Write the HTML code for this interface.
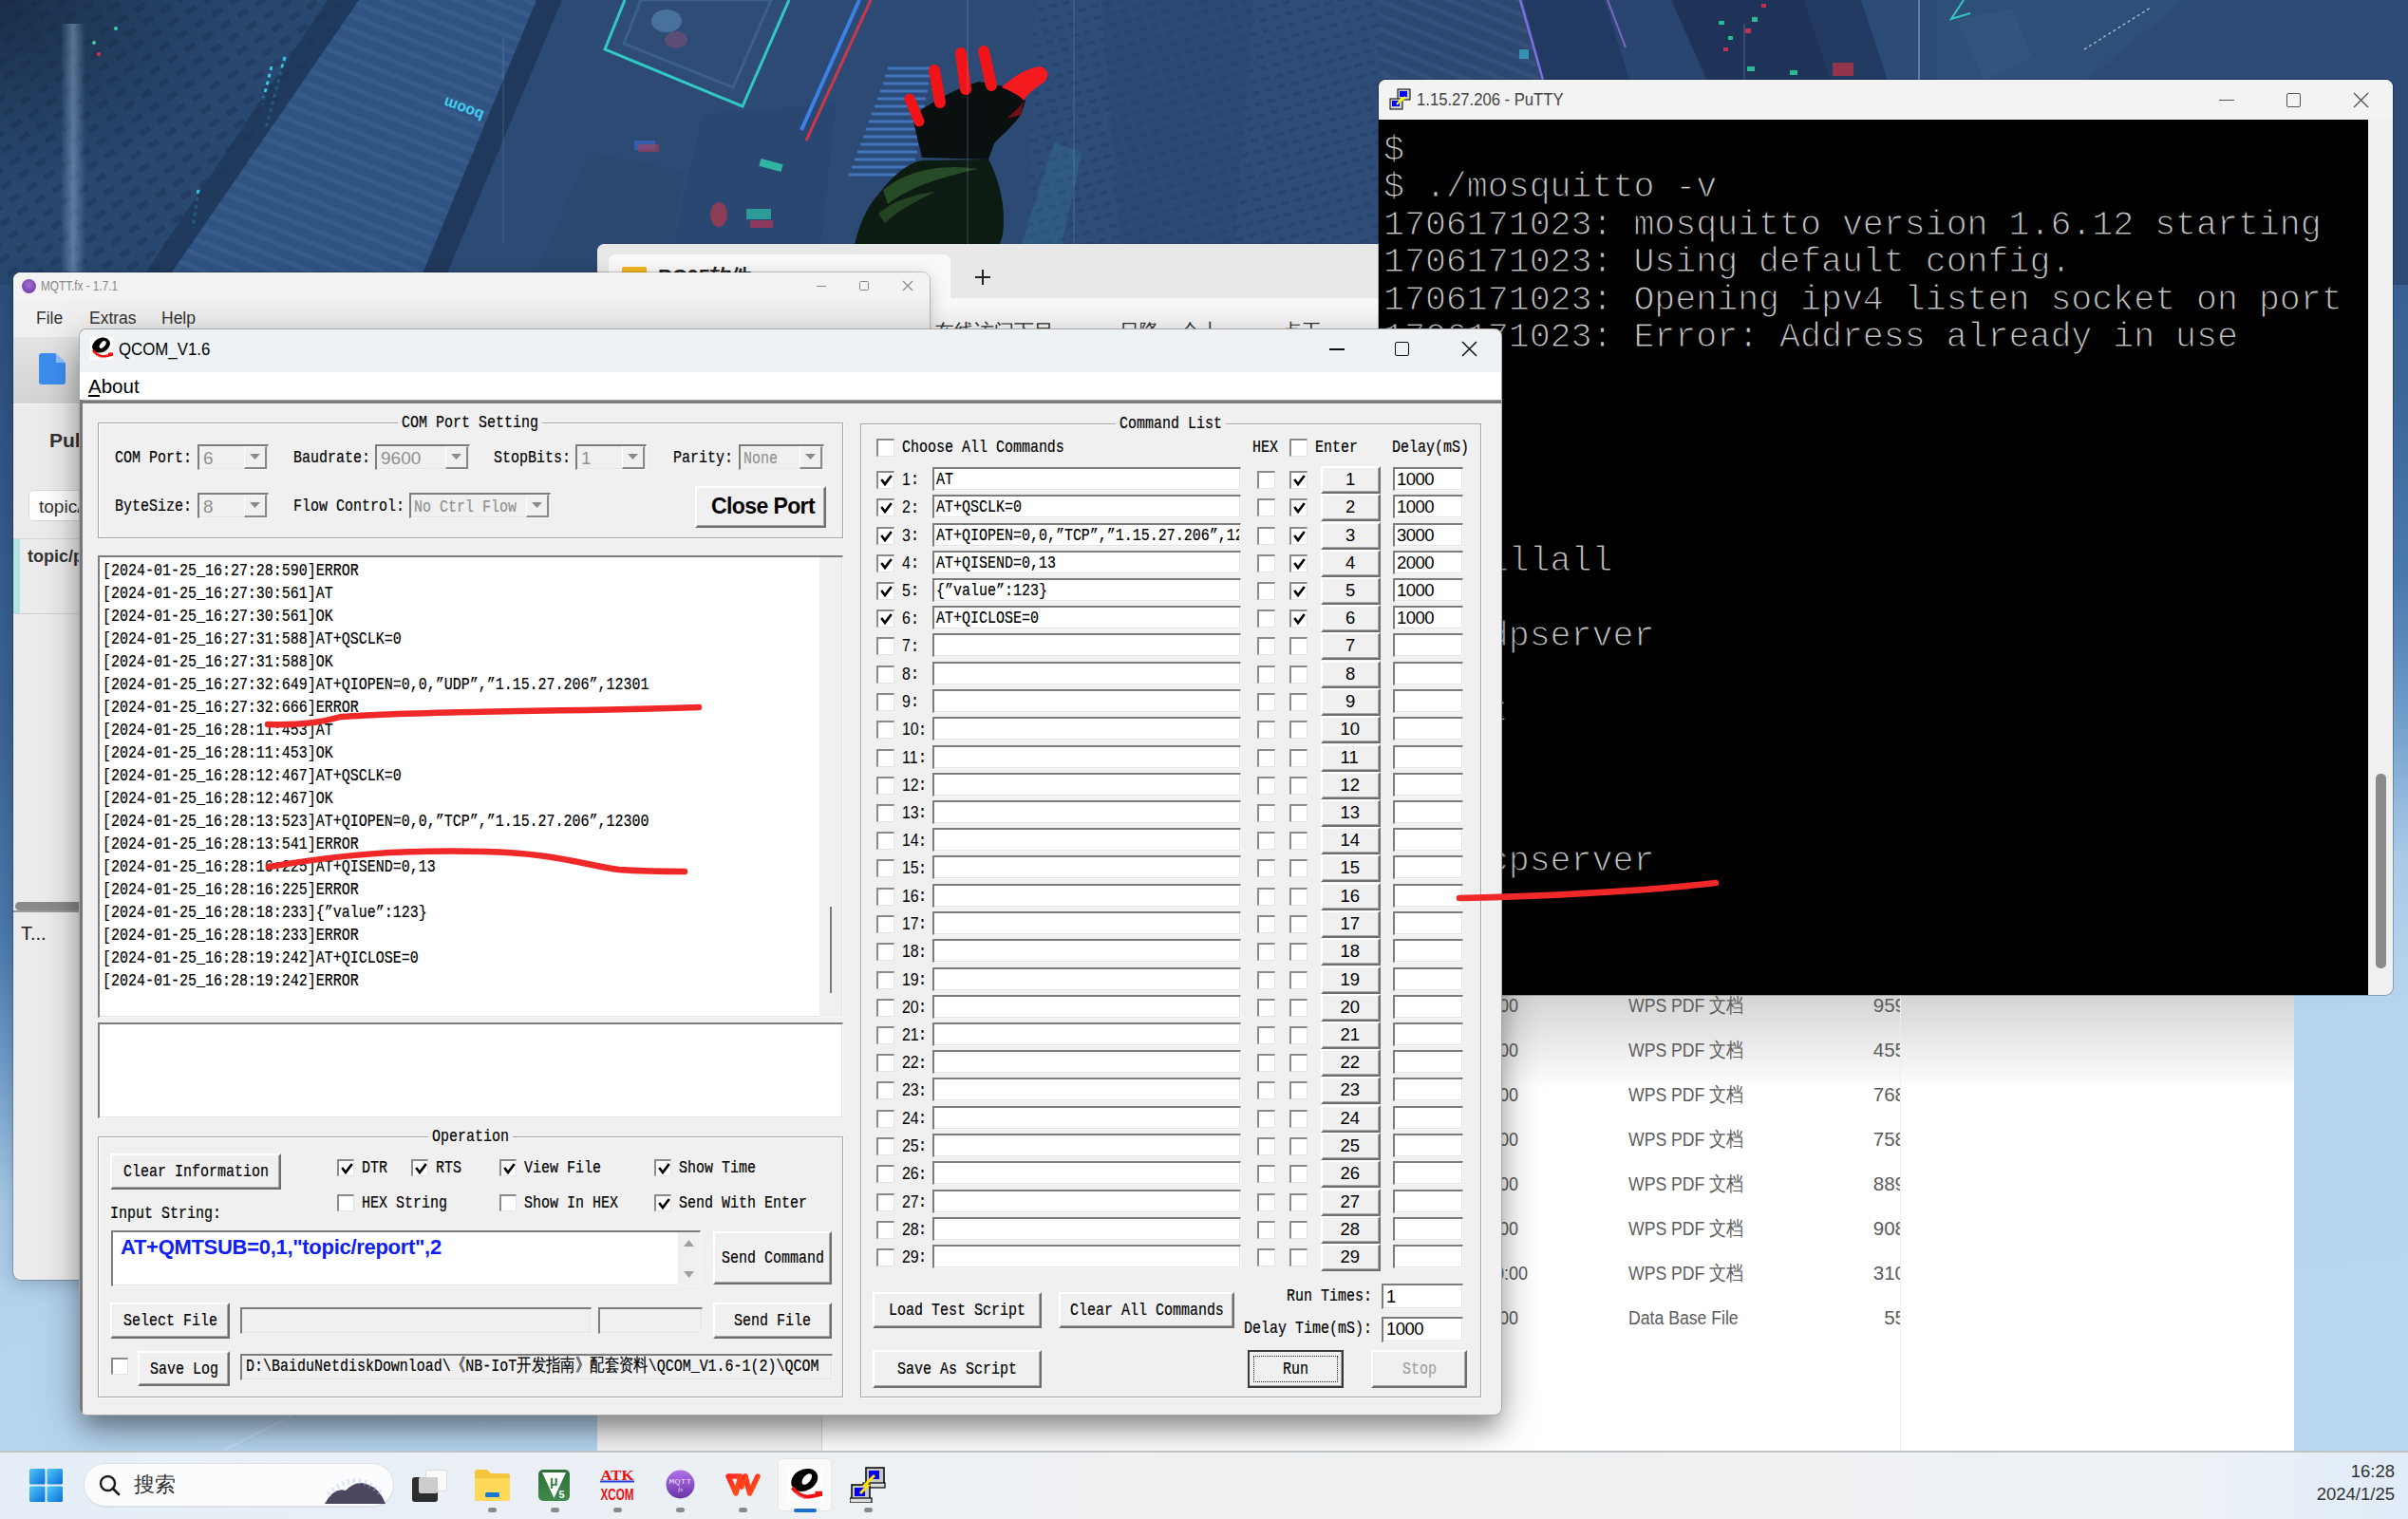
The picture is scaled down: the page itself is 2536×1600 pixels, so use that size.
<!DOCTYPE html><html><head><meta charset="utf-8"><style>
*{margin:0;padding:0;box-sizing:border-box}
html,body{width:2536px;height:1600px;overflow:hidden;background:#2a4468}
body{position:relative;font-family:"Liberation Sans",sans-serif}
.a{position:absolute}
.ss{position:absolute;font-family:"Liberation Mono",monospace;white-space:pre;color:#000;transform-origin:0 0;line-height:1;-webkit-text-stroke:0.2px currentColor}
.ui{position:absolute;font-family:"Liberation Sans",sans-serif;white-space:pre;line-height:1}
.chk{position:absolute;width:19px;height:19px;background:#fff;border-top:2px solid #8a8a8a;border-left:2px solid #8a8a8a;border-right:1px solid #e3e3e3;border-bottom:1px solid #e3e3e3}
.chk svg{position:absolute;left:1px;top:1px}
.edit{position:absolute;background:#fff;border-top:2px solid #7c7c7c;border-left:2px solid #7c7c7c;border-right:1px solid #f6f6f6;border-bottom:1px solid #f6f6f6;box-shadow:inset -1px -1px 0 #e4e4e4}
.btn{position:absolute;background:#f0f0f0;border-top:2px solid #fff;border-left:2px solid #fff;border-right:2px solid #6e6e6e;border-bottom:2px solid #6e6e6e;box-shadow:inset -1px -1px 0 #a8a8a8}
.grp{position:absolute;border:1px solid #a5a5a5;box-shadow:inset 1px 1px 0 #fff,1px 1px 0 #fff}
</style></head><body>
<svg class="a" style="left:0;top:0" width="2536" height="1528" viewBox="0 0 2536 1528">
<defs>
<linearGradient id="wg" x1="0" y1="0" x2="370" y2="2536" gradientUnits="userSpaceOnUse">
<stop offset="0" stop-color="#253c5e"/>
<stop offset="0.1" stop-color="#2d4c78"/>
<stop offset="0.2" stop-color="#33578a"/>
<stop offset="0.3" stop-color="#3c6596"/>
<stop offset="0.38" stop-color="#4a7aac"/>
<stop offset="0.43" stop-color="#6d9ac8"/>
<stop offset="0.49" stop-color="#a8cae8"/>
<stop offset="0.54" stop-color="#b4d3ee"/>
<stop offset="0.75" stop-color="#bad8f0"/>
</linearGradient>
<pattern id="win" width="22" height="16" patternUnits="userSpaceOnUse" patternTransform="rotate(-33)">
<rect width="22" height="16" fill="none"/>
<rect x="3" y="4" width="12" height="6" fill="#1a2c48" opacity="0.35"/>
</pattern>
<pattern id="str" width="20" height="14" patternUnits="userSpaceOnUse" patternTransform="rotate(22)">
<rect x="0" y="0" width="20" height="5" fill="#4a6c99" opacity="0.3"/>
</pattern>
<pattern id="grid" width="14" height="12" patternUnits="userSpaceOnUse" patternTransform="rotate(-15)">
<rect x="2" y="3" width="8" height="4" fill="#203656" opacity="0.3"/>
</pattern>
<linearGradient id="streak" x1="0" y1="0" x2="1" y2="0">
<stop offset="0" stop-color="#9fbde0" stop-opacity="0"/>
<stop offset="0.5" stop-color="#9fbde0" stop-opacity="0.45"/>
<stop offset="1" stop-color="#9fbde0" stop-opacity="0"/>
</linearGradient>
</defs>
<rect width="2536" height="1528" fill="url(#wg)"/>
<rect width="2536" height="300" fill="#2b4a75"/>
<!-- left building -->
<polygon points="0,0 372,0 153,300 0,300" fill="#284870"/>
<polygon points="0,0 372,0 153,300 0,300" fill="url(#win)"/>
<radialGradient id="tl" cx="0" cy="0" r="1" gradientUnits="userSpaceOnUse" gradientTransform="translate(0 0) scale(260 200)"><stop offset="0" stop-color="#15263f" stop-opacity="0.75"/><stop offset="1" stop-color="#15263f" stop-opacity="0"/></radialGradient>
<rect width="400" height="300" fill="url(#tl)"/>
<rect x="64" y="25" width="26" height="275" fill="url(#streak)"/>
<path d="M300 60 L280 135 M286 70 L276 110 M209 200 L203 240" stroke="#38c8e8" stroke-width="3" stroke-dasharray="4 4"/>
<circle cx="104" cy="57" r="2" fill="#e03050"/><circle cx="122" cy="30" r="2" fill="#40d0a0"/><circle cx="99" cy="45" r="2" fill="#40d0a0"/>
<!-- dark edge strip -->
<polygon points="345,0 380,0 172,300 145,300" fill="#1e3657" opacity="0.75"/>
<!-- right facade -->
<polygon points="378,0 568,0 442,300 172,300" fill="#2f5483"/>
<polygon points="378,0 568,0 442,300 172,300" fill="url(#str)"/>
<polygon points="565,0 592,0 466,300 440,300" fill="#1f3557" opacity="0.85"/>
<text x="470" y="120" font-family="Liberation Sans" font-size="16" font-weight="bold" fill="#40d0f0" transform="rotate(200 490 115)">boom</text>
<!-- middle -->
<polygon points="466,300 592,0 1090,0 1080,300" fill="#2c4a74"/>
<polygon points="560,300 620,160 720,180 700,300" fill="#2a4870"/>
<polygon points="740,120 880,110 860,300 700,300" fill="#2a4670" opacity="0.7"/>
<!-- cyan square -->
<polygon points="658,0 831,0 782,112 637,52" fill="#2e4c76"/>
<polyline points="658,0 637,52 782,112 831,0" fill="none" stroke="#32c9c4" stroke-width="3"/>
<polygon points="675,0 812,0 772,92 657,46" fill="none" stroke="#406890" stroke-width="3" opacity="0.7"/>
<ellipse cx="702" cy="22" rx="16" ry="12" fill="#5a8ab8" opacity="0.6"/>
<ellipse cx="712" cy="42" rx="12" ry="9" fill="#b05070" opacity="0.35"/>
<!-- blue/red diagonal lines -->
<line x1="905" y1="0" x2="844" y2="137" stroke="#3d80e8" stroke-width="4"/>
<line x1="917" y1="0" x2="849" y2="148" stroke="#c83848" stroke-width="3"/>
<!-- striped panel left of hand -->
<polygon points="937,68 982,66 962,205 895,187" fill="#2a4a78"/>
<g stroke="#4a80cc" stroke-width="3" opacity="0.8">
<line x1="935" y1="72" x2="980" y2="72"/><line x1="932" y1="80" x2="979" y2="80"/><line x1="930" y1="88" x2="978" y2="88"/><line x1="927" y1="96" x2="977" y2="96"/>
<line x1="924" y1="104" x2="975" y2="104"/><line x1="921" y1="112" x2="974" y2="112"/><line x1="918" y1="120" x2="973" y2="120"/><line x1="915" y1="128" x2="971" y2="128"/>
<line x1="912" y1="136" x2="970" y2="136"/><line x1="909" y1="144" x2="968" y2="144"/><line x1="906" y1="152" x2="967" y2="152"/><line x1="903" y1="160" x2="966" y2="160"/>
<line x1="900" y1="168" x2="964" y2="168"/><line x1="897" y1="176" x2="963" y2="176"/><line x1="894" y1="184" x2="962" y2="184"/>
</g>
<!-- small lights -->
<rect x="800" y="170" width="24" height="8" fill="#2fd2b0" opacity="0.8" transform="rotate(15 812 174)"/>
<rect x="786" y="220" width="26" height="11" fill="#2fd2b0" opacity="0.6"/>
<rect x="790" y="232" width="24" height="8" fill="#d03050" opacity="0.6"/>
<ellipse cx="757" cy="226" rx="9" ry="13" fill="#c03848" opacity="0.65"/>
<rect x="668" y="148" width="22" height="10" fill="#3a6ad0" opacity="0.6"/>
<rect x="672" y="152" width="22" height="8" fill="#c03848" opacity="0.5"/>
<!-- right buildings -->
<polygon points="1080,300 1090,0 1500,0 1452,300" fill="#2d4c77"/>
<polygon points="1080,300 1090,0 1500,0 1452,300" fill="url(#grid)"/>
<polygon points="1075,260 1110,150 1140,160 1115,270" fill="#40b0d0" opacity="0.15"/>
<polygon points="1160,0 1320,0 1300,260 1180,260" fill="#294570" opacity="0.5"/>
<polygon points="1452,0 2536,0 2536,90 1452,90" fill="#2b4a78"/>
<polygon points="1452,0 1600,0 1625,90 1452,90" fill="#2c4770"/>
<polygon points="1452,0 1600,0 1625,90 1452,90" fill="url(#str)" opacity="0.8"/>
<line x1="1601" y1="0" x2="1625" y2="84" stroke="#8070e0" stroke-width="2.5"/>
<rect x="1600" y="52" width="10" height="10" fill="#40c0e0" opacity="0.6"/>
<polygon points="1604,0 1690,0 1720,90 1628,90" fill="#213a62"/>
<polygon points="1690,0 1760,0 1800,90 1718,90" fill="#2a4670"/>
<line x1="1693" y1="0" x2="1712" y2="50" stroke="#9070e0" stroke-width="2" opacity="0.8"/>
<polygon points="1760,0 1900,0 1930,90 1800,90" fill="#1f3358"/>
<g opacity="0.85"><rect x="1810" y="22" width="6" height="4" fill="#30d0a0"/><rect x="1838" y="30" width="6" height="5" fill="#e03050"/><rect x="1820" y="38" width="5" height="4" fill="#30d0a0"/><rect x="1845" y="18" width="6" height="5" fill="#30d0a0"/><rect x="1815" y="50" width="5" height="4" fill="#e03050"/><rect x="1840" y="70" width="8" height="5" fill="#30d0a0"/><rect x="1855" y="4" width="5" height="4" fill="#e03050"/><rect x="1885" y="74" width="8" height="5" fill="#30d0a0"/></g>
<polygon points="1900,0 1960,0 1990,90 1930,90" fill="#223a62"/>
<polygon points="1960,0 2050,0 2080,90 1990,90" fill="#2c4a76"/>
<rect x="1930" y="66" width="22" height="14" fill="#e03040" opacity="0.6"/>
<polygon points="2040,0 2300,0 2190,90 2040,90" fill="#2e4f78"/>
<polyline points="2068,0 2055,20 2075,14" fill="none" stroke="#30c8c0" stroke-width="2"/>
<line x1="2195" y1="52" x2="2265" y2="8" stroke="#d0e0f0" stroke-width="1.5" stroke-dasharray="3 3" opacity="0.7"/>
<polygon points="2060,20 2120,10 2140,60 2090,84" fill="#3a6088" opacity="0.35"/>
<line x1="2021" y1="0" x2="2021" y2="84" stroke="#a0b8e0" stroke-width="1.5" opacity="0.6"/>
<line x1="1837" y1="25" x2="1837" y2="84" stroke="#a0b8e0" stroke-width="1" opacity="0.4"/>
<!-- hand sleeve -->
<path d="M900 258 C905 235 915 215 925 205 C940 185 955 172 971 169 L1041 168 C1048 180 1054 200 1056 215 C1058 235 1057 250 1052 258 Z" fill="#0c1c12"/>
<path d="M930 200 C955 180 990 172 1030 178 C1000 185 960 195 935 215 Z" fill="#3a6a34" opacity="0.6"/>
<path d="M925 225 C940 212 960 205 985 202 C965 212 945 222 932 235 Z" fill="#3a6a34" opacity="0.5"/>
<!-- back of hand -->
<path d="M962 128 L971 115 C990 103 1010 92 1031 86 L1057 91 C1068 95 1078 100 1080 106 L1075 121 C1065 135 1052 145 1047 151 L1041 168 L971 166 Z" fill="#0a0f10"/>
<!-- fingers -->
<g stroke="#f01418" stroke-linecap="round" fill="none">
<path d="M958 104 L968 128" stroke-width="11"/>
<path d="M984 74 L990 108" stroke-width="12"/>
<path d="M1012 56 L1017 94" stroke-width="12"/>
<path d="M1036 54 L1044 90" stroke-width="12"/>
</g>
<path d="M1055 92 C1065 82 1080 72 1095 70 C1104 72 1106 80 1100 86 C1092 92 1082 98 1078 106 C1074 100 1062 95 1055 92 Z" fill="#f51a1e"/>
<path d="M1060 125 C1068 118 1075 112 1078 106 L1075 121 Z" fill="#a01018" opacity="0.7"/>
<!-- vertical thin light lines -->
<line x1="1019" y1="0" x2="1019" y2="257" stroke="#8fb0d8" stroke-width="1" opacity="0.35"/>
<line x1="1131" y1="0" x2="1131" y2="257" stroke="#8fb0d8" stroke-width="1" opacity="0.3"/>
<line x1="530" y1="40" x2="530" y2="257" stroke="#8fb0d8" stroke-width="1" opacity="0.3"/>
<!-- light lines lower wallpaper -->
<line x1="235" y1="1528" x2="310" y2="1490" stroke="#d0e4f4" stroke-width="2" opacity="0.6"/>
</svg>
<div class="a" style="left:629px;top:257px;width:1787px;height:1271px;background:#ffffff;border-radius:8px 8px 0 0;overflow:hidden"><div class="a" style="left:0;top:0;width:1787px;height:57px;background:#e8e8e8"></div><div class="a" style="left:12px;top:11px;width:360px;height:50px;background:#f9f9f9;border-radius:8px 8px 0 0"></div><div class="a" style="left:26px;top:24px;width:26px;height:20px;background:#f2b71d;border-radius:2px"></div><div class="ui" style="left:64px;top:24px;font-size:22px;color:#222;font-weight:bold;">PC05软件</div><div class="a" style="left:390px;top:28px;width:2px;height:20px"></div><div class="a" style="left:398px;top:34px;width:16px;height:2px;background:#222"></div><div class="a" style="left:405px;top:27px;width:2px;height:16px;background:#222"></div><div class="a" style="left:0;top:57px;width:1787px;height:60px;background:#f9f9f9"></div><div class="a" style="left:0;top:1000px;width:236px;height:271px;background:#f3f3f3"></div><div class="ui" style="left:355px;top:82px;font-size:20.5px;color:#333;font-weight:normal;">在线访问下目</div><div class="ui" style="left:550px;top:82px;font-size:20.5px;color:#333;font-weight:normal;">日隆</div><div class="ui" style="left:614px;top:82px;font-size:20.5px;color:#333;font-weight:normal;">会上</div><div class="ui" style="left:721px;top:82px;font-size:20.5px;color:#333;font-weight:normal;">点工</div><div class="a" style="left:953px;top:791px;width:834px;height:100px;background:linear-gradient(rgba(0,0,0,0.17),rgba(0,0,0,0))"></div><div class="ui" style="left:925px;top:792px;font-size:20px;color:#5c5c5c;font-weight:normal;transform:scaleX(0.9);transform-origin:0 0">10:00</div><div class="ui" style="left:1086px;top:792px;font-size:20.5px;color:#5c5c5c;font-weight:normal;transform:scaleX(0.86);transform-origin:0 0">WPS PDF 文档</div><div class="a" style="left:1320px;top:792px;width:52px;height:26px;overflow:hidden"><div class="ui" style="left:0;top:0;width:91px;text-align:right;font-size:20.5px;color:#5c5c5c">959 KB</div></div><div class="ui" style="left:925px;top:839px;font-size:20px;color:#5c5c5c;font-weight:normal;transform:scaleX(0.9);transform-origin:0 0">10:00</div><div class="ui" style="left:1086px;top:839px;font-size:20.5px;color:#5c5c5c;font-weight:normal;transform:scaleX(0.86);transform-origin:0 0">WPS PDF 文档</div><div class="a" style="left:1320px;top:839px;width:52px;height:26px;overflow:hidden"><div class="ui" style="left:0;top:0;width:91px;text-align:right;font-size:20.5px;color:#5c5c5c">455 KB</div></div><div class="ui" style="left:925px;top:886px;font-size:20px;color:#5c5c5c;font-weight:normal;transform:scaleX(0.9);transform-origin:0 0">10:00</div><div class="ui" style="left:1086px;top:886px;font-size:20.5px;color:#5c5c5c;font-weight:normal;transform:scaleX(0.86);transform-origin:0 0">WPS PDF 文档</div><div class="a" style="left:1320px;top:886px;width:52px;height:26px;overflow:hidden"><div class="ui" style="left:0;top:0;width:91px;text-align:right;font-size:20.5px;color:#5c5c5c">768 KB</div></div><div class="ui" style="left:925px;top:933px;font-size:20px;color:#5c5c5c;font-weight:normal;transform:scaleX(0.9);transform-origin:0 0">10:00</div><div class="ui" style="left:1086px;top:933px;font-size:20.5px;color:#5c5c5c;font-weight:normal;transform:scaleX(0.86);transform-origin:0 0">WPS PDF 文档</div><div class="a" style="left:1320px;top:933px;width:52px;height:26px;overflow:hidden"><div class="ui" style="left:0;top:0;width:91px;text-align:right;font-size:20.5px;color:#5c5c5c">758 KB</div></div><div class="ui" style="left:925px;top:980px;font-size:20px;color:#5c5c5c;font-weight:normal;transform:scaleX(0.9);transform-origin:0 0">10:00</div><div class="ui" style="left:1086px;top:980px;font-size:20.5px;color:#5c5c5c;font-weight:normal;transform:scaleX(0.86);transform-origin:0 0">WPS PDF 文档</div><div class="a" style="left:1320px;top:980px;width:52px;height:26px;overflow:hidden"><div class="ui" style="left:0;top:0;width:91px;text-align:right;font-size:20.5px;color:#5c5c5c">889 KB</div></div><div class="ui" style="left:925px;top:1027px;font-size:20px;color:#5c5c5c;font-weight:normal;transform:scaleX(0.9);transform-origin:0 0">10:00</div><div class="ui" style="left:1086px;top:1027px;font-size:20.5px;color:#5c5c5c;font-weight:normal;transform:scaleX(0.86);transform-origin:0 0">WPS PDF 文档</div><div class="a" style="left:1320px;top:1027px;width:52px;height:26px;overflow:hidden"><div class="ui" style="left:0;top:0;width:91px;text-align:right;font-size:20.5px;color:#5c5c5c">908 KB</div></div><div class="ui" style="left:935px;top:1074px;font-size:20px;color:#5c5c5c;font-weight:normal;transform:scaleX(0.9);transform-origin:0 0">10:00</div><div class="ui" style="left:1086px;top:1074px;font-size:20.5px;color:#5c5c5c;font-weight:normal;transform:scaleX(0.86);transform-origin:0 0">WPS PDF 文档</div><div class="a" style="left:1320px;top:1074px;width:52px;height:26px;overflow:hidden"><div class="ui" style="left:0;top:0;width:91px;text-align:right;font-size:20.5px;color:#5c5c5c">310 KB</div></div><div class="ui" style="left:925px;top:1121px;font-size:20px;color:#5c5c5c;font-weight:normal;transform:scaleX(0.9);transform-origin:0 0">10:00</div><div class="ui" style="left:1086px;top:1121px;font-size:20.5px;color:#5c5c5c;font-weight:normal;transform:scaleX(0.86);transform-origin:0 0">Data Base File</div><div class="a" style="left:1320px;top:1121px;width:52px;height:26px;overflow:hidden"><div class="ui" style="left:0;top:0;width:91px;text-align:right;font-size:20.5px;color:#5c5c5c">55 KB</div></div><div class="a" style="left:1372px;top:760px;width:1px;height:511px;background:#eeeeee"></div><div class="a" style="left:236px;top:1234px;width:1px;height:37px;background:#d8d8d8"></div></div><div class="a" style="left:14px;top:287px;width:965px;height:1061px;background:#ececec;border-radius:8px;overflow:hidden;box-shadow:0 0 0 1px rgba(0,0,0,0.2),0 4px 20px rgba(0,0,0,0.2)"><div class="a" style="left:0;top:0;width:965px;height:29px;background:#f3f3f3"></div><div class="a" style="left:9px;top:7px;width:15px;height:15px;border-radius:50%;background:radial-gradient(circle at 50% 40%,#a070d0,#6a2fa0)"></div><div class="ui" style="left:29px;top:7px;font-size:14px;color:#888;font-weight:normal;transform:scaleX(0.84);transform-origin:0 0">MQTT.fx - 1.7.1</div><div class="a" style="left:846px;top:14px;width:10px;height:1.3px;background:#888"></div><div class="a" style="left:891px;top:9px;width:10px;height:10px;border:1.2px solid #888;border-radius:1.5px"></div><svg class="a" style="left:936px;top:8px" width="12" height="12"><path d="M1 1 L11 11 M11 1 L1 11" stroke="#888" stroke-width="1.2"/></svg><div class="a" style="left:0;top:29px;width:965px;height:39px;background:#f0f0f0"></div><div class="ui" style="left:24px;top:40px;font-size:17.5px;color:#333;font-weight:normal;">File</div><div class="ui" style="left:80px;top:40px;font-size:17.5px;color:#333;font-weight:normal;">Extras</div><div class="ui" style="left:156px;top:40px;font-size:17.5px;color:#333;font-weight:normal;">Help</div><div class="a" style="left:0;top:68px;width:965px;height:70px;background:linear-gradient(#e4e4e4,#d3d3d3)"></div><svg class="a" style="left:27px;top:85px" width="28" height="33"><path d="M3 0 H17 L28 11 V30 Q28 33 25 33 H3 Q0 33 0 30 V3 Q0 0 3 0 Z" fill="#3d8ef0"/><path d="M18 0 L28 10 H18 Z" fill="#8fc0fa"/></svg><div class="a" style="left:0;top:138px;width:965px;height:1px;background:#f7f7f7"></div><div class="ui" style="left:38px;top:166px;font-size:21px;color:#333;font-weight:bold;">Publish</div><div class="a" style="left:16px;top:229px;width:300px;height:33px;background:#fff;border:1px solid #d6d6d6;border-radius:5px"></div><div class="ui" style="left:27px;top:237px;font-size:19px;color:#333;font-weight:normal;">topic/report</div><div class="a" style="left:0;top:280px;width:965px;height:1px;background:#d5d5d5"></div><div class="a" style="left:0;top:281px;width:7px;height:78px;background:#b3e3e3"></div><div class="ui" style="left:15px;top:290px;font-size:18px;color:#333;font-weight:bold;">topic/publish</div><div class="a" style="left:0;top:359px;width:965px;height:1px;background:#d0d0d0"></div><div class="a" style="left:2px;top:663px;width:400px;height:9px;background:#8a8a8a;border-radius:5px"></div><div class="a" style="left:0;top:672px;width:965px;height:2px;background:#9a9a9a"></div><div class="ui" style="left:8px;top:686px;font-size:20px;color:#222;font-weight:normal;">T...</div></div><div class="a" style="left:1452px;top:84px;width:1068px;height:964px;background:#f0f0f0;border-radius:8px;overflow:hidden;box-shadow:0 0 0 1px rgba(0,0,0,0.25)"><div class="a" style="left:0;top:0;width:1068px;height:42px;background:#f3f3f3"></div><svg class="a" style="left:11px;top:9px" width="24" height="24" viewBox="0 0 24 24"><rect x="9" y="1" width="13" height="11" fill="#ccc" stroke="#000"/><rect x="11" y="3" width="8" height="6" fill="#00f"/><rect x="1" y="11" width="13" height="11" fill="#ccc" stroke="#000"/><rect x="3" y="13" width="8" height="6" fill="#00f"/><path d="M8 17 L14 10 L13 13 L17 9" stroke="#ff0" stroke-width="2" fill="none"/></svg><div class="ui" style="left:40px;top:12px;font-size:18.5px;color:#444;font-weight:normal;transform:scaleX(0.9);transform-origin:0 0">1.15.27.206 - PuTTY</div><div class="a" style="left:885px;top:21px;width:16px;height:1px;background:#555"></div><div class="a" style="left:956px;top:14px;width:15px;height:15px;border:1px solid #555;border-radius:2px"></div><svg class="a" style="left:1026px;top:13px" width="17" height="17"><path d="M1 1 L16 16 M16 1 L1 16" stroke="#555" stroke-width="1.4"/></svg><div class="a" style="left:0;top:42px;width:1042px;height:922px;background:#000"></div><div class="a" style="left:1050px;top:731px;width:11px;height:205px;background:#8a8a8a;border-radius:5px"></div><div class="a" style="left:5px;top:57px;font-family:'Liberation Mono',monospace;font-size:36.6px;line-height:1;color:#c4c4c4;-webkit-text-stroke:1.1px #000;white-space:pre">$</div><div class="a" style="left:5px;top:96px;font-family:'Liberation Mono',monospace;font-size:36.6px;line-height:1;color:#c4c4c4;-webkit-text-stroke:1.1px #000;white-space:pre">$ ./mosquitto -v</div><div class="a" style="left:5px;top:136px;font-family:'Liberation Mono',monospace;font-size:36.6px;line-height:1;color:#c4c4c4;-webkit-text-stroke:1.1px #000;white-space:pre">1706171023: mosquitto version 1.6.12 starting</div><div class="a" style="left:5px;top:175px;font-family:'Liberation Mono',monospace;font-size:36.6px;line-height:1;color:#c4c4c4;-webkit-text-stroke:1.1px #000;white-space:pre">1706171023: Using default config.</div><div class="a" style="left:5px;top:215px;font-family:'Liberation Mono',monospace;font-size:36.6px;line-height:1;color:#c4c4c4;-webkit-text-stroke:1.1px #000;white-space:pre">1706171023: Opening ipv4 listen socket on port</div><div class="a" style="left:5px;top:254px;font-family:'Liberation Mono',monospace;font-size:36.6px;line-height:1;color:#c4c4c4;-webkit-text-stroke:1.1px #000;white-space:pre">1706171023: Error: Address already in use</div><div class="a" style="left:5px;top:490px;font-family:'Liberation Mono',monospace;font-size:36.6px;line-height:1;color:#c4c4c4;-webkit-text-stroke:1.1px #000;white-space:pre">$ ./killall</div><div class="a" style="left:5px;top:569px;font-family:'Liberation Mono',monospace;font-size:36.6px;line-height:1;color:#c4c4c4;-webkit-text-stroke:1.1px #000;white-space:pre">$ ./udpserver</div><div class="a" style="left:5px;top:648px;font-family:'Liberation Mono',monospace;font-size:36.6px;line-height:1;color:#c4c4c4;-webkit-text-stroke:1.1px #000;white-space:pre">$ ls t</div><div class="a" style="left:5px;top:806px;font-family:'Liberation Mono',monospace;font-size:36.6px;line-height:1;color:#c4c4c4;-webkit-text-stroke:1.1px #000;white-space:pre">$ ./tcpserver</div></div><div class="a" style="left:83px;top:346px;width:1499px;height:1145px;background:#f0f0f0;border-radius:8px;border:1px solid rgba(110,110,110,0.55);overflow:hidden;box-shadow:0 12px 40px rgba(0,0,0,0.35),0 18px 22px -6px rgba(0,0,0,0.22)"><div class="a" style="left:0;top:0;width:1499px;height:45px;background:#eef2f4"></div><div class="a" style="left:0;top:45px;width:1499px;height:29px;background:#ffffff"></div><div class="a" style="left:0;top:74px;width:1499px;height:4px;background:linear-gradient(#a8a8a8,#6c6c6c 60%,#9a9a9a)"></div><div class="a" style="left:0;top:74px;width:3px;height:1071px;background:#777"></div></div><svg class="a" style="left:95px;top:355px" width="24" height="24" viewBox="0 0 24 24"><rect width="24" height="24" fill="#fff"/><ellipse cx="11.5" cy="8.6" rx="9.8" ry="7.4" transform="rotate(-28 11.5 8.6)" fill="#000"/><ellipse cx="13.2" cy="8" rx="4.6" ry="2.5" transform="rotate(-50 13.2 8)" fill="#fff"/><path d="M3 14 C6 18 9 20 13 20.3 C16 20.5 19 19.5 23.5 18.5" stroke="#f01010" stroke-width="2.6" fill="none"/><rect x="19" y="16.5" width="5" height="3.5" fill="#f01010"/><path d="M5 17.5 C7 19.5 9 20.5 12 21.5" stroke="#f06060" stroke-width="1" fill="none"/></svg><div class="ui" style="left:125px;top:359px;font-size:18.5px;color:#000;font-weight:normal;transform:scaleX(0.91);transform-origin:0 0">QCOM_V1.6</div><div class="a" style="left:1400px;top:367px;width:16px;height:2px;background:#111"></div><div class="a" style="left:1469px;top:360px;width:15px;height:15px;border:1.6px solid #111;border-radius:2px"></div><svg class="a" style="left:1539px;top:359px" width="17" height="17"><path d="M1 1 L16 16 M16 1 L1 16" stroke="#111" stroke-width="1.5"/></svg><div class="ui" style="left:93px;top:397px;font-size:20.5px;color:#000;font-weight:normal;">About</div><div class="a" style="left:93px;top:416px;width:12px;height:1.5px;background:#000"></div><div class="grp" style="left:103px;top:445px;width:785px;height:122px"></div><div class="a" style="left:419px;top:435px;width:152px;height:20px;background:#f0f0f0"></div><div class="ss" style="left:423.1px;top:437.2px;font-size:18.5px;transform:scaleX(0.81);color:#000;font-weight:normal;">COM Port Setting</div><div class="ss" style="left:121px;top:474.2px;font-size:18.5px;transform:scaleX(0.81);color:#000;font-weight:normal;">COM Port:</div><div class="edit" style="left:208px;top:468px;width:75px;height:27px;background:#f0f0f0"></div><div class="a" style="left:257px;top:470px;width:24px;height:24px;background:#f0f0f0;border-right:2px solid #8a8a8a;border-bottom:2px solid #8a8a8a;border-top:1px solid #fff;border-left:1px solid #fff"></div><svg class="a" style="left:263px;top:478px" width="12" height="7"><path d="M0 0 H11 L5.5 6 Z" fill="#8c8c8c"/></svg><div class="ui" style="left:214px;top:472.5px;font-size:19px;color:#909090;font-weight:normal;">6</div><div class="ss" style="left:309px;top:474.2px;font-size:18.5px;transform:scaleX(0.81);color:#000;font-weight:normal;">Baudrate:</div><div class="edit" style="left:395px;top:468px;width:100px;height:27px;background:#f0f0f0"></div><div class="a" style="left:469px;top:470px;width:24px;height:24px;background:#f0f0f0;border-right:2px solid #8a8a8a;border-bottom:2px solid #8a8a8a;border-top:1px solid #fff;border-left:1px solid #fff"></div><svg class="a" style="left:475px;top:478px" width="12" height="7"><path d="M0 0 H11 L5.5 6 Z" fill="#8c8c8c"/></svg><div class="ui" style="left:401px;top:472.5px;font-size:19px;color:#909090;font-weight:normal;">9600</div><div class="ss" style="left:520px;top:474.2px;font-size:18.5px;transform:scaleX(0.81);color:#000;font-weight:normal;">StopBits:</div><div class="edit" style="left:606px;top:468px;width:75px;height:27px;background:#f0f0f0"></div><div class="a" style="left:655px;top:470px;width:24px;height:24px;background:#f0f0f0;border-right:2px solid #8a8a8a;border-bottom:2px solid #8a8a8a;border-top:1px solid #fff;border-left:1px solid #fff"></div><svg class="a" style="left:661px;top:478px" width="12" height="7"><path d="M0 0 H11 L5.5 6 Z" fill="#8c8c8c"/></svg><div class="ui" style="left:612px;top:472.5px;font-size:19px;color:#909090;font-weight:normal;">1</div><div class="ss" style="left:709px;top:474.2px;font-size:18.5px;transform:scaleX(0.81);color:#000;font-weight:normal;">Parity:</div><div class="edit" style="left:778px;top:468px;width:90px;height:27px;background:#f0f0f0"></div><div class="a" style="left:842px;top:470px;width:24px;height:24px;background:#f0f0f0;border-right:2px solid #8a8a8a;border-bottom:2px solid #8a8a8a;border-top:1px solid #fff;border-left:1px solid #fff"></div><svg class="a" style="left:848px;top:478px" width="12" height="7"><path d="M0 0 H11 L5.5 6 Z" fill="#8c8c8c"/></svg><div class="ss" style="left:783px;top:474.7px;font-size:18.5px;transform:scaleX(0.81);color:#909090;font-weight:normal;">None</div><div class="ss" style="left:121px;top:525.2px;font-size:18.5px;transform:scaleX(0.81);color:#000;font-weight:normal;">ByteSize:</div><div class="edit" style="left:208px;top:519px;width:75px;height:27px;background:#f0f0f0"></div><div class="a" style="left:257px;top:521px;width:24px;height:24px;background:#f0f0f0;border-right:2px solid #8a8a8a;border-bottom:2px solid #8a8a8a;border-top:1px solid #fff;border-left:1px solid #fff"></div><svg class="a" style="left:263px;top:529px" width="12" height="7"><path d="M0 0 H11 L5.5 6 Z" fill="#8c8c8c"/></svg><div class="ui" style="left:214px;top:523.5px;font-size:19px;color:#909090;font-weight:normal;">8</div><div class="ss" style="left:309px;top:525.2px;font-size:18.5px;transform:scaleX(0.81);color:#000;font-weight:normal;">Flow Control:</div><div class="edit" style="left:431px;top:519px;width:149px;height:27px;background:#f0f0f0"></div><div class="a" style="left:554px;top:521px;width:24px;height:24px;background:#f0f0f0;border-right:2px solid #8a8a8a;border-bottom:2px solid #8a8a8a;border-top:1px solid #fff;border-left:1px solid #fff"></div><svg class="a" style="left:560px;top:529px" width="12" height="7"><path d="M0 0 H11 L5.5 6 Z" fill="#8c8c8c"/></svg><div class="ss" style="left:436px;top:525.7px;font-size:18.5px;transform:scaleX(0.81);color:#909090;font-weight:normal;">No Ctrl Flow</div><div class="btn" style="left:732px;top:512px;width:138px;height:44px"></div><div class="ui" style="left:749px;top:522px;font-size:23px;color:#000;font-weight:bold;letter-spacing:-0.6px">Close Port</div><div class="edit" style="left:103px;top:585px;width:785px;height:487px;background:#fff"></div><div class="a" style="left:863px;top:587px;width:23px;height:484px;background:#f0f0f0"></div><div class="a" style="left:874px;top:955px;width:2px;height:91px;background:#7a7a7a"></div><div class="ss" style="left:108px;top:593.2px;font-size:18.5px;transform:scaleX(0.81);color:#000;font-weight:normal;">[2024-01-25_16:27:28:590]ERROR</div><div class="ss" style="left:108px;top:617.2px;font-size:18.5px;transform:scaleX(0.81);color:#000;font-weight:normal;">[2024-01-25_16:27:30:561]AT</div><div class="ss" style="left:108px;top:641.2px;font-size:18.5px;transform:scaleX(0.81);color:#000;font-weight:normal;">[2024-01-25_16:27:30:561]OK</div><div class="ss" style="left:108px;top:665.2px;font-size:18.5px;transform:scaleX(0.81);color:#000;font-weight:normal;">[2024-01-25_16:27:31:588]AT+QSCLK=0</div><div class="ss" style="left:108px;top:689.2px;font-size:18.5px;transform:scaleX(0.81);color:#000;font-weight:normal;">[2024-01-25_16:27:31:588]OK</div><div class="ss" style="left:108px;top:713.2px;font-size:18.5px;transform:scaleX(0.81);color:#000;font-weight:normal;">[2024-01-25_16:27:32:649]AT+QIOPEN=0,0,”UDP”,”1.15.27.206”,12301</div><div class="ss" style="left:108px;top:737.2px;font-size:18.5px;transform:scaleX(0.81);color:#000;font-weight:normal;">[2024-01-25_16:27:32:666]ERROR</div><div class="ss" style="left:108px;top:761.2px;font-size:18.5px;transform:scaleX(0.81);color:#000;font-weight:normal;">[2024-01-25_16:28:11:453]AT</div><div class="ss" style="left:108px;top:785.2px;font-size:18.5px;transform:scaleX(0.81);color:#000;font-weight:normal;">[2024-01-25_16:28:11:453]OK</div><div class="ss" style="left:108px;top:809.2px;font-size:18.5px;transform:scaleX(0.81);color:#000;font-weight:normal;">[2024-01-25_16:28:12:467]AT+QSCLK=0</div><div class="ss" style="left:108px;top:833.2px;font-size:18.5px;transform:scaleX(0.81);color:#000;font-weight:normal;">[2024-01-25_16:28:12:467]OK</div><div class="ss" style="left:108px;top:857.2px;font-size:18.5px;transform:scaleX(0.81);color:#000;font-weight:normal;">[2024-01-25_16:28:13:523]AT+QIOPEN=0,0,”TCP”,”1.15.27.206”,12300</div><div class="ss" style="left:108px;top:881.2px;font-size:18.5px;transform:scaleX(0.81);color:#000;font-weight:normal;">[2024-01-25_16:28:13:541]ERROR</div><div class="ss" style="left:108px;top:905.2px;font-size:18.5px;transform:scaleX(0.81);color:#000;font-weight:normal;">[2024-01-25_16:28:16:225]AT+QISEND=0,13</div><div class="ss" style="left:108px;top:929.2px;font-size:18.5px;transform:scaleX(0.81);color:#000;font-weight:normal;">[2024-01-25_16:28:16:225]ERROR</div><div class="ss" style="left:108px;top:953.2px;font-size:18.5px;transform:scaleX(0.81);color:#000;font-weight:normal;">[2024-01-25_16:28:18:233]{”value”:123}</div><div class="ss" style="left:108px;top:977.2px;font-size:18.5px;transform:scaleX(0.81);color:#000;font-weight:normal;">[2024-01-25_16:28:18:233]ERROR</div><div class="ss" style="left:108px;top:1001.2px;font-size:18.5px;transform:scaleX(0.81);color:#000;font-weight:normal;">[2024-01-25_16:28:19:242]AT+QICLOSE=0</div><div class="ss" style="left:108px;top:1025.2px;font-size:18.5px;transform:scaleX(0.81);color:#000;font-weight:normal;">[2024-01-25_16:28:19:242]ERROR</div><div class="edit" style="left:103px;top:1077px;width:785px;height:101px;background:#fff"></div><div class="grp" style="left:103px;top:1197px;width:785px;height:275px"></div><div class="a" style="left:451px;top:1187px;width:89px;height:20px;background:#f0f0f0"></div><div class="ss" style="left:454.5px;top:1189.2px;font-size:18.5px;transform:scaleX(0.81);color:#000;font-weight:normal;">Operation</div><div class="btn" style="left:116px;top:1215px;width:180px;height:38px;"></div><div class="ss" style="left:129.6px;top:1226.2px;font-size:18.5px;transform:scaleX(0.81);color:#000;font-weight:normal;">Clear Information</div><div class="chk" style="left:355px;top:1221px;width:18px;height:18px"><svg width="15" height="15" viewBox="0 0 15 15"><path d="M3 7 L6 11 L12 3" stroke="#000" stroke-width="2.6" fill="none" stroke-linecap="square"/></svg></div><div class="ss" style="left:381px;top:1222.2px;font-size:18.5px;transform:scaleX(0.81);color:#000;font-weight:normal;">DTR</div><div class="chk" style="left:433px;top:1221px;width:18px;height:18px"><svg width="15" height="15" viewBox="0 0 15 15"><path d="M3 7 L6 11 L12 3" stroke="#000" stroke-width="2.6" fill="none" stroke-linecap="square"/></svg></div><div class="ss" style="left:459px;top:1222.2px;font-size:18.5px;transform:scaleX(0.81);color:#000;font-weight:normal;">RTS</div><div class="chk" style="left:526px;top:1221px;width:18px;height:18px"><svg width="15" height="15" viewBox="0 0 15 15"><path d="M3 7 L6 11 L12 3" stroke="#000" stroke-width="2.6" fill="none" stroke-linecap="square"/></svg></div><div class="ss" style="left:552px;top:1222.2px;font-size:18.5px;transform:scaleX(0.81);color:#000;font-weight:normal;">View File</div><div class="chk" style="left:689px;top:1221px;width:18px;height:18px"><svg width="15" height="15" viewBox="0 0 15 15"><path d="M3 7 L6 11 L12 3" stroke="#000" stroke-width="2.6" fill="none" stroke-linecap="square"/></svg></div><div class="ss" style="left:715px;top:1222.2px;font-size:18.5px;transform:scaleX(0.81);color:#000;font-weight:normal;">Show Time</div><div class="chk" style="left:355px;top:1258px;width:18px;height:18px"></div><div class="ss" style="left:381px;top:1259.2px;font-size:18.5px;transform:scaleX(0.81);color:#000;font-weight:normal;">HEX String</div><div class="chk" style="left:526px;top:1258px;width:18px;height:18px"></div><div class="ss" style="left:552px;top:1259.2px;font-size:18.5px;transform:scaleX(0.81);color:#000;font-weight:normal;">Show In HEX</div><div class="chk" style="left:689px;top:1258px;width:18px;height:18px"><svg width="15" height="15" viewBox="0 0 15 15"><path d="M3 7 L6 11 L12 3" stroke="#000" stroke-width="2.6" fill="none" stroke-linecap="square"/></svg></div><div class="ss" style="left:715px;top:1259.2px;font-size:18.5px;transform:scaleX(0.81);color:#000;font-weight:normal;">Send With Enter</div><div class="ss" style="left:116px;top:1270.2px;font-size:18.5px;transform:scaleX(0.81);color:#000;font-weight:normal;">Input String:</div><div class="edit" style="left:117px;top:1296px;width:621px;height:59px;background:#fff"></div><div class="a" style="left:714px;top:1298px;width:23px;height:56px;background:#f0f0f0"></div><svg class="a" style="left:719px;top:1306px" width="13" height="40"><path d="M6.5 0 L12 7 H1 Z M6.5 40 L12 33 H1 Z" fill="#a0a0a0"/></svg><div class="ui" style="left:127px;top:1303px;font-size:22px;color:#1020f0;font-weight:bold;letter-spacing:-0.3px">AT+QMTSUB=0,1,"topic/report",2</div><div class="btn" style="left:751px;top:1297px;width:125px;height:56px;"></div><div class="ss" style="left:759.6px;top:1317.2px;font-size:18.5px;transform:scaleX(0.81);color:#000;font-weight:normal;">Send Command</div><div class="btn" style="left:116px;top:1372px;width:126px;height:38px;"></div><div class="ss" style="left:129.5px;top:1383.2px;font-size:18.5px;transform:scaleX(0.81);color:#000;font-weight:normal;">Select File</div><div class="edit" style="left:253px;top:1377px;width:370px;height:28px;background:#f0f0f0"></div><div class="edit" style="left:630px;top:1377px;width:110px;height:28px;background:#f0f0f0"></div><div class="btn" style="left:751px;top:1372px;width:125px;height:38px;"></div><div class="ss" style="left:773.0px;top:1383.2px;font-size:18.5px;transform:scaleX(0.81);color:#000;font-weight:normal;">Send File</div><div class="chk" style="left:117px;top:1430px;width:18px;height:18px"></div><div class="btn" style="left:145px;top:1423px;width:97px;height:37px;"></div><div class="ss" style="left:157.5px;top:1433.7px;font-size:18.5px;transform:scaleX(0.81);color:#000;font-weight:normal;">Save Log</div><div class="edit" style="left:253px;top:1426px;width:624px;height:28px;background:#f0f0f0"></div><div class="a" style="left:256px;top:1428px;width:619px;height:24px;overflow:hidden"><div class="ss" style="left:3px;top:3px;font-size:18.5px;transform:scaleX(0.81);color:#000;font-weight:normal;">D:\BaiduNetdiskDownload\《NB-IoT开发指南》配套资料\QCOM_V1.6-1(2)\QCOM</div></div><div class="grp" style="left:906px;top:446px;width:654px;height:1026px"></div><div class="a" style="left:1175px;top:436px;width:116px;height:20px;background:#f0f0f0"></div><div class="ss" style="left:1179.1px;top:438.2px;font-size:18.5px;transform:scaleX(0.81);color:#000;font-weight:normal;">Command List</div><div class="chk" style="left:923px;top:462px;width:19px;height:19px"></div><div class="ss" style="left:950px;top:463.2px;font-size:18.5px;transform:scaleX(0.81);color:#000;font-weight:normal;">Choose All Commands</div><div class="ss" style="left:1319px;top:463.2px;font-size:18.5px;transform:scaleX(0.81);color:#000;font-weight:normal;">HEX</div><div class="chk" style="left:1358px;top:462px;width:19px;height:19px"></div><div class="ss" style="left:1385px;top:463.2px;font-size:18.5px;transform:scaleX(0.81);color:#000;font-weight:normal;">Enter</div><div class="ss" style="left:1466px;top:463.2px;font-size:18.5px;transform:scaleX(0.81);color:#000;font-weight:normal;">Delay(mS)</div><div class="chk" style="left:923px;top:496px;width:19px;height:19px"><svg width="15" height="15" viewBox="0 0 15 15"><path d="M3 7 L6 11 L12 3" stroke="#000" stroke-width="2.6" fill="none" stroke-linecap="square"/></svg></div><div class="ui" style="left:950px;top:496px;font-size:18.5px;color:#000;font-weight:normal;transform:scaleX(0.86);transform-origin:0 0">1</div><div class="ss" style="left:959px;top:497.2px;font-size:18.5px;transform:scaleX(0.81);color:#000;font-weight:normal;">:</div><div class="edit" style="left:982px;top:492px;width:325px;height:25px;background:#fff"></div><div class="a" style="left:984px;top:494px;width:321px;height:22px;overflow:hidden"><div class="ss" style="left:2px;top:3.2px;font-size:18.5px;transform:scaleX(0.81);color:#000;font-weight:normal;">AT</div></div><div class="chk" style="left:1324px;top:496px;width:19px;height:19px"></div><div class="chk" style="left:1358px;top:496px;width:19px;height:19px"><svg width="15" height="15" viewBox="0 0 15 15"><path d="M3 7 L6 11 L12 3" stroke="#000" stroke-width="2.6" fill="none" stroke-linecap="square"/></svg></div><div class="btn" style="left:1391px;top:491px;width:63px;height:29px"></div><div class="ui" style="left:1417.0px;top:496px;font-size:18.5px;color:#000;font-weight:normal;">1</div><div class="edit" style="left:1467px;top:492px;width:74px;height:25px;background:#fff"></div><div class="ui" style="left:1471px;top:496px;font-size:18.5px;color:#000;font-weight:normal;letter-spacing:-0.5px">1000</div><div class="chk" style="left:923px;top:525px;width:19px;height:19px"><svg width="15" height="15" viewBox="0 0 15 15"><path d="M3 7 L6 11 L12 3" stroke="#000" stroke-width="2.6" fill="none" stroke-linecap="square"/></svg></div><div class="ui" style="left:950px;top:525px;font-size:18.5px;color:#000;font-weight:normal;transform:scaleX(0.86);transform-origin:0 0">2</div><div class="ss" style="left:959px;top:526.5px;font-size:18.5px;transform:scaleX(0.81);color:#000;font-weight:normal;">:</div><div class="edit" style="left:982px;top:521px;width:325px;height:25px;background:#fff"></div><div class="a" style="left:984px;top:523px;width:321px;height:22px;overflow:hidden"><div class="ss" style="left:2px;top:3.2px;font-size:18.5px;transform:scaleX(0.81);color:#000;font-weight:normal;">AT+QSCLK=0</div></div><div class="chk" style="left:1324px;top:525px;width:19px;height:19px"></div><div class="chk" style="left:1358px;top:525px;width:19px;height:19px"><svg width="15" height="15" viewBox="0 0 15 15"><path d="M3 7 L6 11 L12 3" stroke="#000" stroke-width="2.6" fill="none" stroke-linecap="square"/></svg></div><div class="btn" style="left:1391px;top:520px;width:63px;height:29px"></div><div class="ui" style="left:1417.0px;top:525px;font-size:18.5px;color:#000;font-weight:normal;">2</div><div class="edit" style="left:1467px;top:521px;width:74px;height:25px;background:#fff"></div><div class="ui" style="left:1471px;top:525px;font-size:18.5px;color:#000;font-weight:normal;letter-spacing:-0.5px">1000</div><div class="chk" style="left:923px;top:555px;width:19px;height:19px"><svg width="15" height="15" viewBox="0 0 15 15"><path d="M3 7 L6 11 L12 3" stroke="#000" stroke-width="2.6" fill="none" stroke-linecap="square"/></svg></div><div class="ui" style="left:950px;top:555px;font-size:18.5px;color:#000;font-weight:normal;transform:scaleX(0.86);transform-origin:0 0">3</div><div class="ss" style="left:959px;top:555.7px;font-size:18.5px;transform:scaleX(0.81);color:#000;font-weight:normal;">:</div><div class="edit" style="left:982px;top:551px;width:325px;height:25px;background:#fff"></div><div class="a" style="left:984px;top:553px;width:321px;height:22px;overflow:hidden"><div class="ss" style="left:2px;top:3.2px;font-size:18.5px;transform:scaleX(0.81);color:#000;font-weight:normal;">AT+QIOPEN=0,0,”TCP”,”1.15.27.206”,12300</div></div><div class="chk" style="left:1324px;top:555px;width:19px;height:19px"></div><div class="chk" style="left:1358px;top:555px;width:19px;height:19px"><svg width="15" height="15" viewBox="0 0 15 15"><path d="M3 7 L6 11 L12 3" stroke="#000" stroke-width="2.6" fill="none" stroke-linecap="square"/></svg></div><div class="btn" style="left:1391px;top:550px;width:63px;height:29px"></div><div class="ui" style="left:1417.0px;top:555px;font-size:18.5px;color:#000;font-weight:normal;">3</div><div class="edit" style="left:1467px;top:551px;width:74px;height:25px;background:#fff"></div><div class="ui" style="left:1471px;top:555px;font-size:18.5px;color:#000;font-weight:normal;letter-spacing:-0.5px">3000</div><div class="chk" style="left:923px;top:584px;width:19px;height:19px"><svg width="15" height="15" viewBox="0 0 15 15"><path d="M3 7 L6 11 L12 3" stroke="#000" stroke-width="2.6" fill="none" stroke-linecap="square"/></svg></div><div class="ui" style="left:950px;top:584px;font-size:18.5px;color:#000;font-weight:normal;transform:scaleX(0.86);transform-origin:0 0">4</div><div class="ss" style="left:959px;top:585.0px;font-size:18.5px;transform:scaleX(0.81);color:#000;font-weight:normal;">:</div><div class="edit" style="left:982px;top:580px;width:325px;height:25px;background:#fff"></div><div class="a" style="left:984px;top:582px;width:321px;height:22px;overflow:hidden"><div class="ss" style="left:2px;top:3.2px;font-size:18.5px;transform:scaleX(0.81);color:#000;font-weight:normal;">AT+QISEND=0,13</div></div><div class="chk" style="left:1324px;top:584px;width:19px;height:19px"></div><div class="chk" style="left:1358px;top:584px;width:19px;height:19px"><svg width="15" height="15" viewBox="0 0 15 15"><path d="M3 7 L6 11 L12 3" stroke="#000" stroke-width="2.6" fill="none" stroke-linecap="square"/></svg></div><div class="btn" style="left:1391px;top:579px;width:63px;height:29px"></div><div class="ui" style="left:1417.0px;top:584px;font-size:18.5px;color:#000;font-weight:normal;">4</div><div class="edit" style="left:1467px;top:580px;width:74px;height:25px;background:#fff"></div><div class="ui" style="left:1471px;top:584px;font-size:18.5px;color:#000;font-weight:normal;letter-spacing:-0.5px">2000</div><div class="chk" style="left:923px;top:613px;width:19px;height:19px"><svg width="15" height="15" viewBox="0 0 15 15"><path d="M3 7 L6 11 L12 3" stroke="#000" stroke-width="2.6" fill="none" stroke-linecap="square"/></svg></div><div class="ui" style="left:950px;top:613px;font-size:18.5px;color:#000;font-weight:normal;transform:scaleX(0.86);transform-origin:0 0">5</div><div class="ss" style="left:959px;top:614.2px;font-size:18.5px;transform:scaleX(0.81);color:#000;font-weight:normal;">:</div><div class="edit" style="left:982px;top:609px;width:325px;height:25px;background:#fff"></div><div class="a" style="left:984px;top:611px;width:321px;height:22px;overflow:hidden"><div class="ss" style="left:2px;top:3.2px;font-size:18.5px;transform:scaleX(0.81);color:#000;font-weight:normal;">{”value”:123}</div></div><div class="chk" style="left:1324px;top:613px;width:19px;height:19px"></div><div class="chk" style="left:1358px;top:613px;width:19px;height:19px"><svg width="15" height="15" viewBox="0 0 15 15"><path d="M3 7 L6 11 L12 3" stroke="#000" stroke-width="2.6" fill="none" stroke-linecap="square"/></svg></div><div class="btn" style="left:1391px;top:608px;width:63px;height:29px"></div><div class="ui" style="left:1417.0px;top:613px;font-size:18.5px;color:#000;font-weight:normal;">5</div><div class="edit" style="left:1467px;top:609px;width:74px;height:25px;background:#fff"></div><div class="ui" style="left:1471px;top:613px;font-size:18.5px;color:#000;font-weight:normal;letter-spacing:-0.5px">1000</div><div class="chk" style="left:923px;top:642px;width:19px;height:19px"><svg width="15" height="15" viewBox="0 0 15 15"><path d="M3 7 L6 11 L12 3" stroke="#000" stroke-width="2.6" fill="none" stroke-linecap="square"/></svg></div><div class="ui" style="left:950px;top:642px;font-size:18.5px;color:#000;font-weight:normal;transform:scaleX(0.86);transform-origin:0 0">6</div><div class="ss" style="left:959px;top:643.5px;font-size:18.5px;transform:scaleX(0.81);color:#000;font-weight:normal;">:</div><div class="edit" style="left:982px;top:638px;width:325px;height:25px;background:#fff"></div><div class="a" style="left:984px;top:640px;width:321px;height:22px;overflow:hidden"><div class="ss" style="left:2px;top:3.2px;font-size:18.5px;transform:scaleX(0.81);color:#000;font-weight:normal;">AT+QICLOSE=0</div></div><div class="chk" style="left:1324px;top:642px;width:19px;height:19px"></div><div class="chk" style="left:1358px;top:642px;width:19px;height:19px"><svg width="15" height="15" viewBox="0 0 15 15"><path d="M3 7 L6 11 L12 3" stroke="#000" stroke-width="2.6" fill="none" stroke-linecap="square"/></svg></div><div class="btn" style="left:1391px;top:637px;width:63px;height:29px"></div><div class="ui" style="left:1417.0px;top:642px;font-size:18.5px;color:#000;font-weight:normal;">6</div><div class="edit" style="left:1467px;top:638px;width:74px;height:25px;background:#fff"></div><div class="ui" style="left:1471px;top:642px;font-size:18.5px;color:#000;font-weight:normal;letter-spacing:-0.5px">1000</div><div class="chk" style="left:923px;top:671px;width:19px;height:19px"></div><div class="ui" style="left:950px;top:671px;font-size:18.5px;color:#000;font-weight:normal;transform:scaleX(0.86);transform-origin:0 0">7</div><div class="ss" style="left:959px;top:672.7px;font-size:18.5px;transform:scaleX(0.81);color:#000;font-weight:normal;">:</div><div class="edit" style="left:982px;top:667px;width:325px;height:25px;background:#fff"></div><div class="chk" style="left:1324px;top:671px;width:19px;height:19px"></div><div class="chk" style="left:1358px;top:671px;width:19px;height:19px"></div><div class="btn" style="left:1391px;top:666px;width:63px;height:29px"></div><div class="ui" style="left:1417.0px;top:671px;font-size:18.5px;color:#000;font-weight:normal;">7</div><div class="edit" style="left:1467px;top:667px;width:74px;height:25px;background:#fff"></div><div class="chk" style="left:923px;top:701px;width:19px;height:19px"></div><div class="ui" style="left:950px;top:701px;font-size:18.5px;color:#000;font-weight:normal;transform:scaleX(0.86);transform-origin:0 0">8</div><div class="ss" style="left:959px;top:702.0px;font-size:18.5px;transform:scaleX(0.81);color:#000;font-weight:normal;">:</div><div class="edit" style="left:982px;top:697px;width:325px;height:25px;background:#fff"></div><div class="chk" style="left:1324px;top:701px;width:19px;height:19px"></div><div class="chk" style="left:1358px;top:701px;width:19px;height:19px"></div><div class="btn" style="left:1391px;top:696px;width:63px;height:29px"></div><div class="ui" style="left:1417.0px;top:701px;font-size:18.5px;color:#000;font-weight:normal;">8</div><div class="edit" style="left:1467px;top:697px;width:74px;height:25px;background:#fff"></div><div class="chk" style="left:923px;top:730px;width:19px;height:19px"></div><div class="ui" style="left:950px;top:730px;font-size:18.5px;color:#000;font-weight:normal;transform:scaleX(0.86);transform-origin:0 0">9</div><div class="ss" style="left:959px;top:731.2px;font-size:18.5px;transform:scaleX(0.81);color:#000;font-weight:normal;">:</div><div class="edit" style="left:982px;top:726px;width:325px;height:25px;background:#fff"></div><div class="chk" style="left:1324px;top:730px;width:19px;height:19px"></div><div class="chk" style="left:1358px;top:730px;width:19px;height:19px"></div><div class="btn" style="left:1391px;top:725px;width:63px;height:29px"></div><div class="ui" style="left:1417.0px;top:730px;font-size:18.5px;color:#000;font-weight:normal;">9</div><div class="edit" style="left:1467px;top:726px;width:74px;height:25px;background:#fff"></div><div class="chk" style="left:923px;top:759px;width:19px;height:19px"></div><div class="ui" style="left:950px;top:759px;font-size:18.5px;color:#000;font-weight:normal;transform:scaleX(0.86);transform-origin:0 0">10</div><div class="ss" style="left:967px;top:760.5px;font-size:18.5px;transform:scaleX(0.81);color:#000;font-weight:normal;">:</div><div class="edit" style="left:982px;top:755px;width:325px;height:25px;background:#fff"></div><div class="chk" style="left:1324px;top:759px;width:19px;height:19px"></div><div class="chk" style="left:1358px;top:759px;width:19px;height:19px"></div><div class="btn" style="left:1391px;top:754px;width:63px;height:29px"></div><div class="ui" style="left:1411.5px;top:759px;font-size:18.5px;color:#000;font-weight:normal;">10</div><div class="edit" style="left:1467px;top:755px;width:74px;height:25px;background:#fff"></div><div class="chk" style="left:923px;top:789px;width:19px;height:19px"></div><div class="ui" style="left:950px;top:789px;font-size:18.5px;color:#000;font-weight:normal;transform:scaleX(0.86);transform-origin:0 0">11</div><div class="ss" style="left:967px;top:789.7px;font-size:18.5px;transform:scaleX(0.81);color:#000;font-weight:normal;">:</div><div class="edit" style="left:982px;top:785px;width:325px;height:25px;background:#fff"></div><div class="chk" style="left:1324px;top:789px;width:19px;height:19px"></div><div class="chk" style="left:1358px;top:789px;width:19px;height:19px"></div><div class="btn" style="left:1391px;top:784px;width:63px;height:29px"></div><div class="ui" style="left:1411.5px;top:789px;font-size:18.5px;color:#000;font-weight:normal;">11</div><div class="edit" style="left:1467px;top:785px;width:74px;height:25px;background:#fff"></div><div class="chk" style="left:923px;top:818px;width:19px;height:19px"></div><div class="ui" style="left:950px;top:818px;font-size:18.5px;color:#000;font-weight:normal;transform:scaleX(0.86);transform-origin:0 0">12</div><div class="ss" style="left:967px;top:819.0px;font-size:18.5px;transform:scaleX(0.81);color:#000;font-weight:normal;">:</div><div class="edit" style="left:982px;top:814px;width:325px;height:25px;background:#fff"></div><div class="chk" style="left:1324px;top:818px;width:19px;height:19px"></div><div class="chk" style="left:1358px;top:818px;width:19px;height:19px"></div><div class="btn" style="left:1391px;top:813px;width:63px;height:29px"></div><div class="ui" style="left:1411.5px;top:818px;font-size:18.5px;color:#000;font-weight:normal;">12</div><div class="edit" style="left:1467px;top:814px;width:74px;height:25px;background:#fff"></div><div class="chk" style="left:923px;top:847px;width:19px;height:19px"></div><div class="ui" style="left:950px;top:847px;font-size:18.5px;color:#000;font-weight:normal;transform:scaleX(0.86);transform-origin:0 0">13</div><div class="ss" style="left:967px;top:848.2px;font-size:18.5px;transform:scaleX(0.81);color:#000;font-weight:normal;">:</div><div class="edit" style="left:982px;top:843px;width:325px;height:25px;background:#fff"></div><div class="chk" style="left:1324px;top:847px;width:19px;height:19px"></div><div class="chk" style="left:1358px;top:847px;width:19px;height:19px"></div><div class="btn" style="left:1391px;top:842px;width:63px;height:29px"></div><div class="ui" style="left:1411.5px;top:847px;font-size:18.5px;color:#000;font-weight:normal;">13</div><div class="edit" style="left:1467px;top:843px;width:74px;height:25px;background:#fff"></div><div class="chk" style="left:923px;top:876px;width:19px;height:19px"></div><div class="ui" style="left:950px;top:876px;font-size:18.5px;color:#000;font-weight:normal;transform:scaleX(0.86);transform-origin:0 0">14</div><div class="ss" style="left:967px;top:877.5px;font-size:18.5px;transform:scaleX(0.81);color:#000;font-weight:normal;">:</div><div class="edit" style="left:982px;top:872px;width:325px;height:25px;background:#fff"></div><div class="chk" style="left:1324px;top:876px;width:19px;height:19px"></div><div class="chk" style="left:1358px;top:876px;width:19px;height:19px"></div><div class="btn" style="left:1391px;top:871px;width:63px;height:29px"></div><div class="ui" style="left:1411.5px;top:876px;font-size:18.5px;color:#000;font-weight:normal;">14</div><div class="edit" style="left:1467px;top:872px;width:74px;height:25px;background:#fff"></div><div class="chk" style="left:923px;top:905px;width:19px;height:19px"></div><div class="ui" style="left:950px;top:905px;font-size:18.5px;color:#000;font-weight:normal;transform:scaleX(0.86);transform-origin:0 0">15</div><div class="ss" style="left:967px;top:906.7px;font-size:18.5px;transform:scaleX(0.81);color:#000;font-weight:normal;">:</div><div class="edit" style="left:982px;top:901px;width:325px;height:25px;background:#fff"></div><div class="chk" style="left:1324px;top:905px;width:19px;height:19px"></div><div class="chk" style="left:1358px;top:905px;width:19px;height:19px"></div><div class="btn" style="left:1391px;top:900px;width:63px;height:29px"></div><div class="ui" style="left:1411.5px;top:905px;font-size:18.5px;color:#000;font-weight:normal;">15</div><div class="edit" style="left:1467px;top:901px;width:74px;height:25px;background:#fff"></div><div class="chk" style="left:923px;top:935px;width:19px;height:19px"></div><div class="ui" style="left:950px;top:935px;font-size:18.5px;color:#000;font-weight:normal;transform:scaleX(0.86);transform-origin:0 0">16</div><div class="ss" style="left:967px;top:936.0px;font-size:18.5px;transform:scaleX(0.81);color:#000;font-weight:normal;">:</div><div class="edit" style="left:982px;top:931px;width:325px;height:25px;background:#fff"></div><div class="chk" style="left:1324px;top:935px;width:19px;height:19px"></div><div class="chk" style="left:1358px;top:935px;width:19px;height:19px"></div><div class="btn" style="left:1391px;top:930px;width:63px;height:29px"></div><div class="ui" style="left:1411.5px;top:935px;font-size:18.5px;color:#000;font-weight:normal;">16</div><div class="edit" style="left:1467px;top:931px;width:74px;height:25px;background:#fff"></div><div class="chk" style="left:923px;top:964px;width:19px;height:19px"></div><div class="ui" style="left:950px;top:964px;font-size:18.5px;color:#000;font-weight:normal;transform:scaleX(0.86);transform-origin:0 0">17</div><div class="ss" style="left:967px;top:965.2px;font-size:18.5px;transform:scaleX(0.81);color:#000;font-weight:normal;">:</div><div class="edit" style="left:982px;top:960px;width:325px;height:25px;background:#fff"></div><div class="chk" style="left:1324px;top:964px;width:19px;height:19px"></div><div class="chk" style="left:1358px;top:964px;width:19px;height:19px"></div><div class="btn" style="left:1391px;top:959px;width:63px;height:29px"></div><div class="ui" style="left:1411.5px;top:964px;font-size:18.5px;color:#000;font-weight:normal;">17</div><div class="edit" style="left:1467px;top:960px;width:74px;height:25px;background:#fff"></div><div class="chk" style="left:923px;top:993px;width:19px;height:19px"></div><div class="ui" style="left:950px;top:993px;font-size:18.5px;color:#000;font-weight:normal;transform:scaleX(0.86);transform-origin:0 0">18</div><div class="ss" style="left:967px;top:994.5px;font-size:18.5px;transform:scaleX(0.81);color:#000;font-weight:normal;">:</div><div class="edit" style="left:982px;top:989px;width:325px;height:25px;background:#fff"></div><div class="chk" style="left:1324px;top:993px;width:19px;height:19px"></div><div class="chk" style="left:1358px;top:993px;width:19px;height:19px"></div><div class="btn" style="left:1391px;top:988px;width:63px;height:29px"></div><div class="ui" style="left:1411.5px;top:993px;font-size:18.5px;color:#000;font-weight:normal;">18</div><div class="edit" style="left:1467px;top:989px;width:74px;height:25px;background:#fff"></div><div class="chk" style="left:923px;top:1023px;width:19px;height:19px"></div><div class="ui" style="left:950px;top:1023px;font-size:18.5px;color:#000;font-weight:normal;transform:scaleX(0.86);transform-origin:0 0">19</div><div class="ss" style="left:967px;top:1023.7px;font-size:18.5px;transform:scaleX(0.81);color:#000;font-weight:normal;">:</div><div class="edit" style="left:982px;top:1019px;width:325px;height:25px;background:#fff"></div><div class="chk" style="left:1324px;top:1023px;width:19px;height:19px"></div><div class="chk" style="left:1358px;top:1023px;width:19px;height:19px"></div><div class="btn" style="left:1391px;top:1018px;width:63px;height:29px"></div><div class="ui" style="left:1411.5px;top:1023px;font-size:18.5px;color:#000;font-weight:normal;">19</div><div class="edit" style="left:1467px;top:1019px;width:74px;height:25px;background:#fff"></div><div class="chk" style="left:923px;top:1052px;width:19px;height:19px"></div><div class="ui" style="left:950px;top:1052px;font-size:18.5px;color:#000;font-weight:normal;transform:scaleX(0.86);transform-origin:0 0">20</div><div class="ss" style="left:967px;top:1053.0px;font-size:18.5px;transform:scaleX(0.81);color:#000;font-weight:normal;">:</div><div class="edit" style="left:982px;top:1048px;width:325px;height:25px;background:#fff"></div><div class="chk" style="left:1324px;top:1052px;width:19px;height:19px"></div><div class="chk" style="left:1358px;top:1052px;width:19px;height:19px"></div><div class="btn" style="left:1391px;top:1047px;width:63px;height:29px"></div><div class="ui" style="left:1411.5px;top:1052px;font-size:18.5px;color:#000;font-weight:normal;">20</div><div class="edit" style="left:1467px;top:1048px;width:74px;height:25px;background:#fff"></div><div class="chk" style="left:923px;top:1081px;width:19px;height:19px"></div><div class="ui" style="left:950px;top:1081px;font-size:18.5px;color:#000;font-weight:normal;transform:scaleX(0.86);transform-origin:0 0">21</div><div class="ss" style="left:967px;top:1082.2px;font-size:18.5px;transform:scaleX(0.81);color:#000;font-weight:normal;">:</div><div class="edit" style="left:982px;top:1077px;width:325px;height:25px;background:#fff"></div><div class="chk" style="left:1324px;top:1081px;width:19px;height:19px"></div><div class="chk" style="left:1358px;top:1081px;width:19px;height:19px"></div><div class="btn" style="left:1391px;top:1076px;width:63px;height:29px"></div><div class="ui" style="left:1411.5px;top:1081px;font-size:18.5px;color:#000;font-weight:normal;">21</div><div class="edit" style="left:1467px;top:1077px;width:74px;height:25px;background:#fff"></div><div class="chk" style="left:923px;top:1110px;width:19px;height:19px"></div><div class="ui" style="left:950px;top:1110px;font-size:18.5px;color:#000;font-weight:normal;transform:scaleX(0.86);transform-origin:0 0">22</div><div class="ss" style="left:967px;top:1111.5px;font-size:18.5px;transform:scaleX(0.81);color:#000;font-weight:normal;">:</div><div class="edit" style="left:982px;top:1106px;width:325px;height:25px;background:#fff"></div><div class="chk" style="left:1324px;top:1110px;width:19px;height:19px"></div><div class="chk" style="left:1358px;top:1110px;width:19px;height:19px"></div><div class="btn" style="left:1391px;top:1105px;width:63px;height:29px"></div><div class="ui" style="left:1411.5px;top:1110px;font-size:18.5px;color:#000;font-weight:normal;">22</div><div class="edit" style="left:1467px;top:1106px;width:74px;height:25px;background:#fff"></div><div class="chk" style="left:923px;top:1139px;width:19px;height:19px"></div><div class="ui" style="left:950px;top:1139px;font-size:18.5px;color:#000;font-weight:normal;transform:scaleX(0.86);transform-origin:0 0">23</div><div class="ss" style="left:967px;top:1140.7px;font-size:18.5px;transform:scaleX(0.81);color:#000;font-weight:normal;">:</div><div class="edit" style="left:982px;top:1135px;width:325px;height:25px;background:#fff"></div><div class="chk" style="left:1324px;top:1139px;width:19px;height:19px"></div><div class="chk" style="left:1358px;top:1139px;width:19px;height:19px"></div><div class="btn" style="left:1391px;top:1134px;width:63px;height:29px"></div><div class="ui" style="left:1411.5px;top:1139px;font-size:18.5px;color:#000;font-weight:normal;">23</div><div class="edit" style="left:1467px;top:1135px;width:74px;height:25px;background:#fff"></div><div class="chk" style="left:923px;top:1169px;width:19px;height:19px"></div><div class="ui" style="left:950px;top:1169px;font-size:18.5px;color:#000;font-weight:normal;transform:scaleX(0.86);transform-origin:0 0">24</div><div class="ss" style="left:967px;top:1170.0px;font-size:18.5px;transform:scaleX(0.81);color:#000;font-weight:normal;">:</div><div class="edit" style="left:982px;top:1165px;width:325px;height:25px;background:#fff"></div><div class="chk" style="left:1324px;top:1169px;width:19px;height:19px"></div><div class="chk" style="left:1358px;top:1169px;width:19px;height:19px"></div><div class="btn" style="left:1391px;top:1164px;width:63px;height:29px"></div><div class="ui" style="left:1411.5px;top:1169px;font-size:18.5px;color:#000;font-weight:normal;">24</div><div class="edit" style="left:1467px;top:1165px;width:74px;height:25px;background:#fff"></div><div class="chk" style="left:923px;top:1198px;width:19px;height:19px"></div><div class="ui" style="left:950px;top:1198px;font-size:18.5px;color:#000;font-weight:normal;transform:scaleX(0.86);transform-origin:0 0">25</div><div class="ss" style="left:967px;top:1199.2px;font-size:18.5px;transform:scaleX(0.81);color:#000;font-weight:normal;">:</div><div class="edit" style="left:982px;top:1194px;width:325px;height:25px;background:#fff"></div><div class="chk" style="left:1324px;top:1198px;width:19px;height:19px"></div><div class="chk" style="left:1358px;top:1198px;width:19px;height:19px"></div><div class="btn" style="left:1391px;top:1193px;width:63px;height:29px"></div><div class="ui" style="left:1411.5px;top:1198px;font-size:18.5px;color:#000;font-weight:normal;">25</div><div class="edit" style="left:1467px;top:1194px;width:74px;height:25px;background:#fff"></div><div class="chk" style="left:923px;top:1227px;width:19px;height:19px"></div><div class="ui" style="left:950px;top:1227px;font-size:18.5px;color:#000;font-weight:normal;transform:scaleX(0.86);transform-origin:0 0">26</div><div class="ss" style="left:967px;top:1228.5px;font-size:18.5px;transform:scaleX(0.81);color:#000;font-weight:normal;">:</div><div class="edit" style="left:982px;top:1223px;width:325px;height:25px;background:#fff"></div><div class="chk" style="left:1324px;top:1227px;width:19px;height:19px"></div><div class="chk" style="left:1358px;top:1227px;width:19px;height:19px"></div><div class="btn" style="left:1391px;top:1222px;width:63px;height:29px"></div><div class="ui" style="left:1411.5px;top:1227px;font-size:18.5px;color:#000;font-weight:normal;">26</div><div class="edit" style="left:1467px;top:1223px;width:74px;height:25px;background:#fff"></div><div class="chk" style="left:923px;top:1257px;width:19px;height:19px"></div><div class="ui" style="left:950px;top:1257px;font-size:18.5px;color:#000;font-weight:normal;transform:scaleX(0.86);transform-origin:0 0">27</div><div class="ss" style="left:967px;top:1257.7px;font-size:18.5px;transform:scaleX(0.81);color:#000;font-weight:normal;">:</div><div class="edit" style="left:982px;top:1253px;width:325px;height:25px;background:#fff"></div><div class="chk" style="left:1324px;top:1257px;width:19px;height:19px"></div><div class="chk" style="left:1358px;top:1257px;width:19px;height:19px"></div><div class="btn" style="left:1391px;top:1252px;width:63px;height:29px"></div><div class="ui" style="left:1411.5px;top:1257px;font-size:18.5px;color:#000;font-weight:normal;">27</div><div class="edit" style="left:1467px;top:1253px;width:74px;height:25px;background:#fff"></div><div class="chk" style="left:923px;top:1286px;width:19px;height:19px"></div><div class="ui" style="left:950px;top:1286px;font-size:18.5px;color:#000;font-weight:normal;transform:scaleX(0.86);transform-origin:0 0">28</div><div class="ss" style="left:967px;top:1287.0px;font-size:18.5px;transform:scaleX(0.81);color:#000;font-weight:normal;">:</div><div class="edit" style="left:982px;top:1282px;width:325px;height:25px;background:#fff"></div><div class="chk" style="left:1324px;top:1286px;width:19px;height:19px"></div><div class="chk" style="left:1358px;top:1286px;width:19px;height:19px"></div><div class="btn" style="left:1391px;top:1281px;width:63px;height:29px"></div><div class="ui" style="left:1411.5px;top:1286px;font-size:18.5px;color:#000;font-weight:normal;">28</div><div class="edit" style="left:1467px;top:1282px;width:74px;height:25px;background:#fff"></div><div class="chk" style="left:923px;top:1315px;width:19px;height:19px"></div><div class="ui" style="left:950px;top:1315px;font-size:18.5px;color:#000;font-weight:normal;transform:scaleX(0.86);transform-origin:0 0">29</div><div class="ss" style="left:967px;top:1316.2px;font-size:18.5px;transform:scaleX(0.81);color:#000;font-weight:normal;">:</div><div class="edit" style="left:982px;top:1311px;width:325px;height:25px;background:#fff"></div><div class="chk" style="left:1324px;top:1315px;width:19px;height:19px"></div><div class="chk" style="left:1358px;top:1315px;width:19px;height:19px"></div><div class="btn" style="left:1391px;top:1310px;width:63px;height:29px"></div><div class="ui" style="left:1411.5px;top:1315px;font-size:18.5px;color:#000;font-weight:normal;">29</div><div class="edit" style="left:1467px;top:1311px;width:74px;height:25px;background:#fff"></div><div class="btn" style="left:919px;top:1361px;width:178px;height:38px;"></div><div class="ss" style="left:936.1px;top:1372.2px;font-size:18.5px;transform:scaleX(0.81);color:#000;font-weight:normal;">Load Test Script</div><div class="btn" style="left:1115px;top:1361px;width:185px;height:38px;"></div><div class="ss" style="left:1126.6px;top:1372.2px;font-size:18.5px;transform:scaleX(0.81);color:#000;font-weight:normal;">Clear All Commands</div><div class="ss" style="left:1355.1px;top:1357.2px;font-size:18.5px;transform:scaleX(0.81);color:#000;font-weight:normal;">Run Times:</div><div class="edit" style="left:1455px;top:1352px;width:86px;height:27px;background:#fff"></div><div class="ui" style="left:1460px;top:1357px;font-size:18.5px;color:#000;font-weight:normal;">1</div><div class="ss" style="left:1310.1px;top:1391.2px;font-size:18.5px;transform:scaleX(0.81);color:#000;font-weight:normal;">Delay Time(mS):</div><div class="edit" style="left:1455px;top:1387px;width:86px;height:27px;background:#fff"></div><div class="ui" style="left:1460px;top:1391px;font-size:18.5px;color:#000;font-weight:normal;letter-spacing:-0.5px">1000</div><div class="btn" style="left:919px;top:1422px;width:178px;height:40px;"></div><div class="ss" style="left:945.1px;top:1434.2px;font-size:18.5px;transform:scaleX(0.81);color:#000;font-weight:normal;">Save As Script</div><div class="btn" style="left:1314px;top:1422px;width:101px;height:40px;border-right-color:#3a3a3a;border-bottom-color:#3a3a3a;border-top-color:#3a3a3a;border-left-color:#3a3a3a"></div><div class="a" style="left:1320px;top:1428px;width:89px;height:28px;border:1px dotted #222"></div><div class="ss" style="left:1351.0px;top:1434.2px;font-size:18.5px;transform:scaleX(0.81);color:#000;font-weight:normal;">Run</div><div class="btn" style="left:1444px;top:1422px;width:101px;height:40px;"></div><div class="ss" style="left:1476.5px;top:1434.2px;font-size:18.5px;transform:scaleX(0.81);color:#a0a0a0;font-weight:normal;">Stop</div><svg class="a" style="left:0;top:0" width="2536" height="1600" viewBox="0 0 2536 1600"><g fill="none" stroke="#f02828" stroke-width="6.5" stroke-linecap="round" stroke-linejoin="round"><path d="M282 763 C310 764 335 762 359 755 C450 748 600 750 736 745"/><path d="M283 913 C360 900 420 895 510 897 C580 898 620 912 652 916 C680 918 700 918 721 918"/><path d="M1537 946 C1620 944 1720 940 1807 930"/></g></svg><div class="a" style="left:0;top:1528px;width:2536px;height:72px;background:linear-gradient(90deg,#e5eef7 0%,#eef1f4 40%,#f0f0f0 60%,#eef2f6 90%,#e0ecf8 100%);border-top:2px solid #bfc3c6"></div><svg class="a" style="left:31px;top:1547px" width="35" height="35" viewBox="0 0 35 35"><defs><linearGradient id="wl" x1="0" y1="0" x2="1" y2="1"><stop offset="0" stop-color="#52c8fa"/><stop offset="1" stop-color="#0a6fd8"/></linearGradient></defs><rect x="0" y="0" width="16.5" height="16.5" rx="1.5" fill="url(#wl)"/><rect x="18.5" y="0" width="16.5" height="16.5" rx="1.5" fill="url(#wl)"/><rect x="0" y="18.5" width="16.5" height="16.5" rx="1.5" fill="url(#wl)"/><rect x="18.5" y="18.5" width="16.5" height="16.5" rx="1.5" fill="url(#wl)"/></svg><div class="a" style="left:88px;top:1541px;width:327px;height:46px;background:#fbfcfd;border-radius:23px;border:1px solid #dfe3e8;box-shadow:0 1px 1px rgba(0,0,0,0.06)"></div><svg class="a" style="left:104px;top:1553px" width="23" height="23"><circle cx="9.5" cy="9.5" r="7.5" stroke="#1a1a1a" stroke-width="2.4" fill="none"/><path d="M15 15 L21 21" stroke="#1a1a1a" stroke-width="2.6" stroke-linecap="round"/></svg><div class="ui" style="left:141px;top:1553px;font-size:22px;color:#333;font-weight:normal;">搜索</div><svg class="a" style="left:340px;top:1548px" width="68" height="38"><path d="M2 36 Q12 18 24 22 Q36 10 48 16 Q60 20 66 36 Z" fill="#4d4660"/><path d="M6 26 Q34 -2 62 26" stroke="#a8b8f0" stroke-width="6" fill="none" opacity="0.4" stroke-dasharray="2 4"/></svg><div class="a" style="left:448px;top:1548px;width:23px;height:23px;background:#fafafa;border:1px solid #ddd;border-radius:2px"></div><div class="a" style="left:434px;top:1556px;width:27px;height:26px;background:#2d2d2d;border-radius:3px"></div><div class="a" style="left:441px;top:1556px;width:20px;height:17px;background:#ccc;border-radius:2px"></div><svg class="a" style="left:500px;top:1548px" width="37" height="33"><path d="M0 3 Q0 0 3 0 H13 L17 4 H34 Q37 4 37 7 V30 Q37 33 34 33 H3 Q0 33 0 30 Z" fill="#f6c43c"/><path d="M0 9 H37 V30 Q37 33 34 33 H3 Q0 33 0 30 Z" fill="#ffd95a"/><rect x="11" y="24" width="15" height="5" rx="1.5" fill="#1976d2"/></svg><svg class="a" style="left:567px;top:1548px" width="33" height="33" viewBox="0 0 33 33"><defs><linearGradient id="uvg" x1="0" y1="0" x2="0" y2="1"><stop offset="0" stop-color="#2f6f3a"/><stop offset="1" stop-color="#3f8a4a"/></linearGradient></defs><rect x="0" y="0" width="33" height="33" rx="5" fill="url(#uvg)"/><path d="M4 3 H29 L16.5 30 Z" fill="#fff"/><text x="12" y="17" font-family="Liberation Sans" font-size="14" fill="#2f7a3c" font-weight="bold">μ</text><text x="21.5" y="30" font-family="Liberation Sans" font-size="11" fill="#fff" font-weight="bold">5</text></svg><svg class="a" style="left:632px;top:1546px" width="36" height="36" viewBox="0 0 36 36"><text x="18" y="13" text-anchor="middle" font-family="Liberation Serif" font-size="15" fill="#e81010" font-weight="bold" textLength="35" lengthAdjust="spacingAndGlyphs">ATK</text><rect x="0" y="13.5" width="36" height="2" fill="#3040e0"/><text x="18" y="33.5" text-anchor="middle" font-family="Liberation Sans" font-size="17" fill="#e81010" font-weight="bold" textLength="35" lengthAdjust="spacingAndGlyphs">XCOM</text></svg><svg class="a" style="left:701px;top:1548px" width="31" height="31" viewBox="0 0 31 31"><defs><linearGradient id="mqg" x1="0" y1="0" x2="0" y2="1"><stop offset="0" stop-color="#b070e8"/><stop offset="1" stop-color="#6a34a8"/></linearGradient></defs><circle cx="15.5" cy="15.5" r="15" fill="url(#mqg)"/><text x="15.5" y="15" text-anchor="middle" font-family="Liberation Mono" font-size="7.5" fill="#eadcfa" textLength="24" lengthAdjust="spacingAndGlyphs">MQTT</text><text x="15.5" y="23" text-anchor="middle" font-family="Liberation Serif" font-style="italic" font-size="7" fill="#eadcfa">fx</text></svg><svg class="a" style="left:764px;top:1552px" width="37" height="25" viewBox="0 0 37 25"><defs><linearGradient id="wpg" x1="0" y1="0" x2="1" y2="1"><stop offset="0" stop-color="#ff2626"/><stop offset="1" stop-color="#ff5a12"/></linearGradient></defs><g fill="none" stroke="url(#wpg)" stroke-width="5.5" stroke-linejoin="round" stroke-linecap="round"><path d="M3 3 H16 L11 21 Z"/><path d="M21 3 L25.5 21 L34 3"/><path d="M17 14 L21 3"/></g></svg><div class="a" style="left:819px;top:1536px;width:57px;height:56px;background:#fafafa;border-radius:5px;border:1px solid #e6e6e6"></div><svg class="a" style="left:830px;top:1546px" width="36" height="36" viewBox="0 0 24 24"><rect width="24" height="24" fill="#fff"/><ellipse cx="11.5" cy="8.6" rx="9.8" ry="7.4" transform="rotate(-28 11.5 8.6)" fill="#000"/><ellipse cx="13.2" cy="8" rx="4.6" ry="2.5" transform="rotate(-50 13.2 8)" fill="#fff"/><path d="M3 14 C6 18 9 20 13 20.3 C16 20.5 19 19.5 23.5 18.5" stroke="#f01010" stroke-width="2.6" fill="none"/><rect x="19" y="16.5" width="5" height="3.5" fill="#f01010"/><path d="M5 17.5 C7 19.5 9 20.5 12 21.5" stroke="#f06060" stroke-width="1" fill="none"/></svg><div class="a" style="left:836px;top:1589px;width:24px;height:4px;background:#1a6fd0;border-radius:2px"></div><svg class="a" style="left:895px;top:1545px" width="38" height="38" viewBox="0 0 38 38"><rect x="17" y="1" width="19" height="17" fill="#c8c8c8" stroke="#000" stroke-width="1.5"/><rect x="20" y="4" width="11" height="9" fill="#0000f0"/><rect x="14" y="17" width="23" height="5" fill="#ddd" stroke="#000" stroke-width="1.2"/><rect x="2" y="19" width="19" height="17" fill="#c8c8c8" stroke="#000" stroke-width="1.5"/><rect x="5" y="22" width="11" height="9" fill="#0000f0"/><rect x="0" y="33" width="23" height="5" fill="#ddd" stroke="#000" stroke-width="1.2"/><path d="M11 28 L19 20 L16 19 L26 9" stroke="#ffe000" stroke-width="3" fill="none"/></svg><div class="a" style="left:514px;top:1588px;width:9px;height:5px;background:#8a8a8a;border-radius:3px"></div><div class="a" style="left:580px;top:1588px;width:9px;height:5px;background:#8a8a8a;border-radius:3px"></div><div class="a" style="left:646px;top:1588px;width:9px;height:5px;background:#8a8a8a;border-radius:3px"></div><div class="a" style="left:712px;top:1588px;width:9px;height:5px;background:#8a8a8a;border-radius:3px"></div><div class="a" style="left:778px;top:1588px;width:9px;height:5px;background:#8a8a8a;border-radius:3px"></div><div class="a" style="left:910px;top:1588px;width:9px;height:5px;background:#8a8a8a;border-radius:3px"></div><div class="ui" style="left:2322px;top:1541px;font-size:18.5px;color:#333;font-weight:normal;width:200px;text-align:right">16:28</div><div class="ui" style="left:2322px;top:1565px;font-size:18.5px;color:#333;font-weight:normal;width:200px;text-align:right">2024/1/25</div></body></html>
